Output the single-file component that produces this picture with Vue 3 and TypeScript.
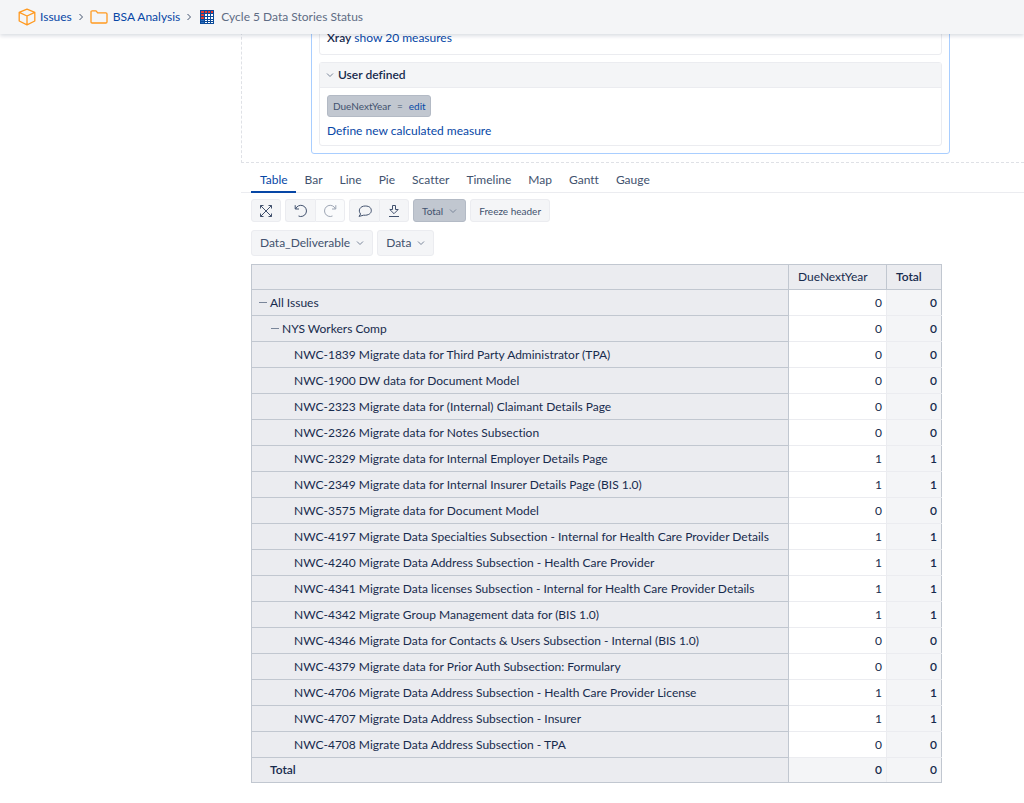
<script setup lang="ts">
import { ref } from 'vue'

interface Row {
  label: string
  level: number
  value: number
  toggle?: boolean
}

const tabs = ['Table', 'Bar', 'Line', 'Pie', 'Scatter', 'Timeline', 'Map', 'Gantt', 'Gauge']
const active = ref('Table')

const rows: Row[] = [
  { label: 'All Issues', level: 0, value: 0, toggle: true },
  { label: 'NYS Workers Comp', level: 1, value: 0, toggle: true },
  { label: 'NWC-1839 Migrate data for Third Party Administrator (TPA)', level: 2, value: 0 },
  { label: 'NWC-1900 DW data for Document Model', level: 2, value: 0 },
  { label: 'NWC-2323 Migrate data for (Internal) Claimant Details Page', level: 2, value: 0 },
  { label: 'NWC-2326 Migrate data for Notes Subsection', level: 2, value: 0 },
  { label: 'NWC-2329 Migrate data for Internal Employer Details Page', level: 2, value: 1 },
  { label: 'NWC-2349 Migrate data for Internal Insurer Details Page (BIS 1.0)', level: 2, value: 1 },
  { label: 'NWC-3575 Migrate data for Document Model', level: 2, value: 0 },
  { label: 'NWC-4197 Migrate Data Specialties Subsection - Internal for Health Care Provider Details', level: 2, value: 1 },
  { label: 'NWC-4240 Migrate Data Address Subsection - Health Care Provider', level: 2, value: 1 },
  { label: 'NWC-4341 Migrate Data licenses Subsection - Internal for Health Care Provider Details', level: 2, value: 1 },
  { label: 'NWC-4342 Migrate Group Management data for (BIS 1.0)', level: 2, value: 1 },
  { label: 'NWC-4346 Migrate Data for Contacts & Users Subsection - Internal (BIS 1.0)', level: 2, value: 0 },
  { label: 'NWC-4379 Migrate data for Prior Auth Subsection: Formulary', level: 2, value: 0 },
  { label: 'NWC-4706 Migrate Data Address Subsection - Health Care Provider License', level: 2, value: 1 },
  { label: 'NWC-4707 Migrate Data Address Subsection - Insurer', level: 2, value: 1 },
  { label: 'NWC-4708 Migrate Data Address Subsection - TPA', level: 2, value: 0 },
]
</script>

<template>
  <div class="app">
    <header class="topbar">
      <nav class="crumbs" aria-label="Breadcrumb">
        <svg class="cube" width="18" height="18" viewBox="0 0 18 18" aria-hidden="true">
          <path d="M9 1.2 L16.8 4.3 V13 L9 16.8 L1.2 13 V4.3 Z M1.2 4.3 L9 8 L16.8 4.3 M9 8 V16.8" />
        </svg>
        <a href="#">Issues</a>
        <svg class="sep" width="6" height="8" viewBox="0 0 6 8" aria-hidden="true"><path d="M1.5 1 L4.5 4 L1.5 7" /></svg>
        <svg class="folder" width="18" height="14" viewBox="0 0 18 14" aria-hidden="true">
          <path d="M1 11.8 V2 Q1 .8 2.2 .8 H5.6 Q6.3 .8 6.7 1.5 L7.4 2.8 H15.8 Q17 2.8 17 4 V11.8 Q17 13 15.8 13 H2.2 Q1 13 1 11.8 Z" />
        </svg>
        <a href="#">BSA Analysis</a>
        <svg class="sep" width="6" height="8" viewBox="0 0 6 8" aria-hidden="true"><path d="M1.5 1 L4.5 4 L1.5 7" /></svg>
        <svg class="report" width="14" height="14" viewBox="0 0 14 14" aria-hidden="true">
          <path fill="#0b4a99" d="M0 0H14V14H0Z" />
          <path fill="#e5392f" d="M1 1H4V3H1ZM5 1H7V3H5ZM8 1H10V3H8ZM11 1H13V3H11ZM1 4H4V6H1ZM1 7H4V9H1Z" />
          <path fill="#2f6fc0" d="M1 10H4V11H1ZM1 12H4V13H1Z" />
          <path fill="#fff" d="M5 4H7V6H5ZM8 4H10V6H8ZM11 4H13V6H11ZM5 7H7V9H5ZM8 7H10V9H8ZM11 7H13V9H11ZM5 10H7V11H5ZM8 10H10V11H8ZM11 10H13V11H11ZM5 12H7V13H5ZM8 12H10V13H8ZM11 12H13V13H11Z" />
        </svg>
        <span class="current">Cycle 5 Data Stories Status</span>
      </nav>
    </header>

    <main class="report-area">
      <section class="builder">
        <div class="dimension">
          <div class="card measures">
            <span><b>Xray</b> <a href="#">show 20 measures</a></span>
          </div>
          <div class="card">
            <h2 class="card-head">
              <svg class="chev" width="8" height="8" viewBox="0 0 8 8" aria-hidden="true"><path d="M1 2.5 L4 5.5 L7 2.5" /></svg>
              User defined
            </h2>
            <div class="card-body">
              <span class="measure"><span>DueNextYear</span><span>=</span><a href="#">edit</a></span>
              <a href="#">Define new calculated measure</a>
            </div>
          </div>
        </div>
      </section>

      <div class="tabs" role="tablist">
        <button v-for="t in tabs" :key="t" type="button" role="tab" :aria-selected="t === active" :class="['tab', { active: t === active }]" @click="active = t">{{ t }}</button>
      </div>

      <div class="results">
        <div class="toolbar">
          <button type="button" class="btn icon" aria-label="Full screen">
            <svg width="14" height="14" viewBox="0 0 14 14"><path d="M1.5 4.5V1.5H4.5M9.5 1.5H12.5V4.5M12.5 9.5V12.5H9.5M4.5 12.5H1.5V9.5M1.5 1.5L12.5 12.5M12.5 1.5L1.5 12.5" /></svg>
          </button>
          <div class="group">
            <button type="button" class="btn icon" aria-label="Undo">
              <svg width="14" height="14" viewBox="0 0 14 14"><path d="M1.2 1.2V5H5M1.6 5A5.6 5.6 0 1 1 4.5 12" /></svg>
            </button>
            <button type="button" class="btn icon" aria-label="Redo" disabled>
              <svg width="14" height="14" viewBox="0 0 14 14"><path d="M12.8 1.2V5H9M12.4 5A5.6 5.6 0 1 0 9.5 12" /></svg>
            </button>
          </div>
          <div class="group">
            <button type="button" class="btn icon" aria-label="Comment">
              <svg width="14" height="14" viewBox="0 0 14 14"><path d="M2.6 10C-.4 6.3 2.2 2 7.2 2S13.3 4.5 13.3 6.8S10.8 11.6 5.6 11.2L1 12.4Z" /></svg>
            </button>
            <button type="button" class="btn icon" aria-label="Export">
              <svg width="14" height="14" viewBox="0 0 14 14"><path d="M5.5 1.5H8.5V5.5H11.2L7 9.7L2.8 5.5H5.5ZM2 12.5H12" /></svg>
            </button>
          </div>
          <button type="button" class="btn pressed" aria-haspopup="menu">Total
            <svg class="chev" width="8" height="8" viewBox="0 0 8 8" aria-hidden="true"><path d="M1 2.5 L4 5.5 L7 2.5" /></svg>
          </button>
          <button type="button" class="btn">Freeze header</button>
        </div>

        <div class="toolbar pages">
          <button v-for="d in ['Data_Deliverable', 'Data']" :key="d" type="button" class="btn large" aria-haspopup="menu">{{ d }}
            <svg class="chev" width="8" height="8" viewBox="0 0 8 8" aria-hidden="true"><path d="M1 2.5 L4 5.5 L7 2.5" /></svg>
          </button>
        </div>

        <table class="grid">
          <thead>
            <tr>
              <td class="corner"></td>
              <th scope="col" class="due">DueNextYear</th>
              <th scope="col" class="sum">Total</th>
            </tr>
          </thead>
          <tbody>
            <tr v-for="r in rows" :key="r.label">
              <th scope="row" :class="'level-' + r.level">
                <button v-if="r.toggle" type="button" class="toggle" :aria-label="'Collapse ' + r.label"></button>{{ r.label }}
              </th>
              <td>{{ r.value }}</td>
              <td class="sum">{{ r.value }}</td>
            </tr>
          </tbody>
          <tfoot>
            <tr>
              <th scope="row">Total</th>
              <td>0</td>
              <td class="sum">0</td>
            </tr>
          </tfoot>
        </table>
      </div>
    </main>
  </div>
</template>

<style>
body {
  background: #fff;
}
</style>

<style scoped>
.app {
  font: 12px/16px Lato, "Open Sans", sans-serif;
  font-variant-ligatures: none;
  color: #172b4d;
}
a {
  color: #0747a6;
  text-decoration: none;
}
svg {
  flex: none;
  fill: none;
  stroke: #42526e;
}
.topbar {
  position: sticky;
  top: 0;
  z-index: 2;
  background: #f4f5f7;
  box-shadow: 0 2px 4px #091e4226;
}
.crumbs {
  display: flex;
  align-items: center;
  height: 34px;
  padding-left: 18px;
}
.crumbs a,
.current {
  white-space: nowrap;
}
.cube,
.folder {
  stroke: #ff991f;
  stroke-width: 1.3;
  stroke-linejoin: round;
}
.cube {
  margin-right: 4px;
}
.folder {
  margin-right: 5px;
}
.sep {
  margin: 0 6px;
}
.report {
  stroke: none;
  margin: 0 7px 0 2px;
}
.current {
  color: #5e6c84;
}
.report-area {
  margin: -12px 0 0 241px;
}
.builder {
  padding: 0 74px 8px 69px;
  border-left: 1px dashed #dfe1e6;
  border-bottom: 1px dashed #dfe1e6;
}
.dimension {
  padding: 0 7px 7px;
  border: 1px solid #a9ceff;
  border-radius: 3px;
}
.card {
  border: 1px solid #ebecf0;
  border-radius: 3px;
}
.measures {
  margin-bottom: 7px;
  padding: 6px 7px 8px;
}
.measures b {
  font-weight: 600;
}
.card-head {
  display: flex;
  align-items: center;
  gap: 4px;
  height: 24px;
  margin: 0;
  padding: 0 6px;
  background: #f4f5f7;
  border-bottom: 1px solid #ebecf0;
  font-size: 12px;
  font-weight: 600;
}
.chev {
  stroke: #7a869a;
}
.card-body {
  display: flex;
  flex-direction: column;
  align-items: flex-start;
  gap: 6px;
  padding: 7px 7px 6px;
}
.measure {
  display: flex;
  gap: 6px;
  padding: 2px 4px 2px 5px;
  background: #c1c7d0;
  border: 1px solid #b3bac5;
  border-radius: 3px;
  font-size: 10px;
  color: #42526e;
}
.tabs {
  display: flex;
  height: 29px;
  padding-left: 10px;
  border-bottom: 1px solid #ebecf0;
}
button {
  font: inherit;
  font-variant-ligatures: none;
  cursor: pointer;
}
.tab {
  margin-bottom: -1px;
  padding: 6px 8px 0 9px;
  border: 0;
  border-bottom: 2px solid transparent;
  background: none;
  color: #42526e;
}
.tab.active {
  color: #0747a6;
  border-color: #0747a6;
}
.results {
  padding: 6px 0 20px 10px;
}
.toolbar {
  display: flex;
  gap: 4px;
}
.pages {
  margin: 8px 0;
}
.group {
  display: flex;
}
.group .btn:first-child {
  border-right: 0;
  border-radius: 3px 0 0 3px;
}
.group .btn + .btn {
  border-radius: 0 3px 3px 0;
}
.btn {
  display: flex;
  align-items: center;
  justify-content: center;
  gap: 6px;
  height: 23px;
  padding: 0 8px;
  border: 1px solid #ebecf0;
  border-radius: 3px;
  background: #f4f5f7;
  color: #42526e;
  font-size: 10px;
  white-space: nowrap;
}
.btn.icon {
  width: 30px;
  padding: 0;
}
.btn:disabled {
  background: #fafbfc;
}
.btn:disabled svg {
  opacity: 0.5;
}
.btn.pressed {
  background: #c1c7d0;
  border-color: #b3bac5;
}
.btn.large {
  height: 26px;
  font-size: 12px;
}
.grid {
  width: 691px;
  border-collapse: collapse;
  border: 1px solid #c1c7d0;
}
.grid th,
.grid td {
  box-sizing: border-box;
  height: 26px;
  padding: 0 7px;
  border: 1px solid #ebecf0;
  font-weight: 400;
  text-align: right;
  white-space: nowrap;
}
.grid td {
  padding: 0 4px;
}
.grid .due {
  width: 98px;
}
.grid .sum {
  width: 55px;
  background: #f4f5f7;
  border-right-color: #c1c7d0;
  font-weight: 600;
}
.grid .level-1 {
  padding-left: 19px;
}
.grid .level-2 {
  padding-left: 42px;
}
.grid thead th,
.grid thead td,
.grid tfoot th,
.grid tfoot td {
  height: 25px;
}
.grid tfoot th,
.grid tfoot td {
  background: #f4f5f7;
  border-bottom-color: #c1c7d0;
  font-weight: 600;
}
.grid tfoot th {
  padding-left: 18px;
}
.grid thead th,
.grid thead .sum,
.grid tbody th,
.grid tfoot th,
.grid .corner {
  background: #ebecf0;
  border-color: #c1c7d0;
  text-align: left;
}
.grid thead th {
  padding: 0 9px;
}
.toggle {
  width: 8px;
  height: 1px;
  margin: 0 3px 0 0;
  padding: 0;
  border: 0;
  background: #7a869a;
  vertical-align: 4px;
}
</style>
